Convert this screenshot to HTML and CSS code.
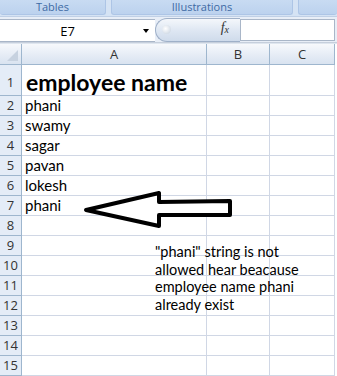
FILE: index.html
```html
<!DOCTYPE html>
<html>
<head>
  <title>employee sheet</title>
  <link rel="stylesheet" href="styles.css">
</head>
<body>
  <!-- ribbon group labels -->
  <div class="ribbon">
    <div class="group g-tables">Tables</div>
    <div class="group g-illus">Illustrations</div>
    <div class="group g-more"></div>
  </div>

  <!-- formula bar -->
  <div class="formulabar">
    <div class="namebox">
      <span class="cellref">E7</span>
      <span class="drop"></span>
    </div>
    <div class="pill">
      <span class="knob"></span>
      <span class="fx"><i>f</i><sub>x</sub></span>
    </div>
    <div class="input"></div>
  </div>

  <div class="sheet">
    <div class="grid">
      <div class="hd corner"><span class="tri"></span></div>
      <div class="hd col">A</div>
      <div class="hd col">B</div>
      <div class="hd col">C</div>

      <div class="rh big">1</div><div class="c big title">employee name</div><div class="c big"></div><div class="c big"></div>
      <div class="rh">2</div><div class="c">phani</div><div class="c"></div><div class="c"></div>
      <div class="rh">3</div><div class="c">swamy</div><div class="c"></div><div class="c"></div>
      <div class="rh">4</div><div class="c">sagar</div><div class="c"></div><div class="c"></div>
      <div class="rh">5</div><div class="c">pavan</div><div class="c"></div><div class="c"></div>
      <div class="rh">6</div><div class="c">lokesh</div><div class="c"></div><div class="c"></div>
      <div class="rh">7</div><div class="c">phani</div><div class="c"></div><div class="c"></div>
      <div class="rh">8</div><div class="c"></div><div class="c"></div><div class="c"></div>
      <div class="rh">9</div><div class="c"></div><div class="c"></div><div class="c"></div>
      <div class="rh">10</div><div class="c"></div><div class="c"></div><div class="c"></div>
      <div class="rh">11</div><div class="c"></div><div class="c"></div><div class="c"></div>
      <div class="rh">12</div><div class="c"></div><div class="c"></div><div class="c"></div>
      <div class="rh">13</div><div class="c"></div><div class="c"></div><div class="c"></div>
      <div class="rh">14</div><div class="c"></div><div class="c"></div><div class="c"></div>
      <div class="rh">15</div><div class="c"></div><div class="c"></div><div class="c"></div>
    </div>

    <!-- drawn arrow and note floating over the cells -->
    <svg class="arrow" width="160" height="44" viewBox="0 0 160 44">
      <polygon points="4,20 77,3 77,12 148,11 148,25 77,25 77,36" fill="#fff" stroke="#000" stroke-width="4" stroke-linejoin="round"/>
    </svg>
    <div class="note">"phani" string is not<br>allowed hear beacause<br>employee name phani<br>already exist</div>
  </div>
</body>
</html>
```

FILE: styles.css
```css
/* sheet screenshot */
body {
  margin: 0;
  width: 337px;
  height: 376px;
  overflow: hidden;
  background: #fff;
  font-family: Lato, "Open Sans", sans-serif;
}

.ribbon {
  display: flex;
  gap: 5px;
  height: 17px;
  background: #d5e3f4;
  box-sizing: border-box;
  border-bottom: 1px solid #c0d0e6;
}

.group {
  height: 15px;
  background: linear-gradient(#c8dbf2, #bcd2ee);
  border: 1px solid #adc5e6;
  border-top: none;
  border-radius: 0 0 3px 3px;
  color: #3e6aa4;
  font-family: "Open Sans", sans-serif;
  font-size: 11px;
  line-height: 14px;
  text-align: center;
  box-sizing: border-box;
}

.g-tables { width: 106px; border-left: none; }
.g-illus { width: 182px; }
.g-more { flex: 1; border-right: none; }

.formulabar {
  display: flex;
  height: 26px;
  padding-top: 2px;
  background: #e8eef7;
  border-bottom: 1px solid #c6cfdc;
  box-sizing: border-box;
}

.namebox {
  width: 155px;
  background: #fff;
  display: flex;
  align-items: center;
  border-top: 1px solid #a9b6c8;
  border-bottom: 1px solid #a9b6c8;
}

.cellref {
  width: 135px;
  text-align: center;
  font-family: "Open Sans", sans-serif;
  font-size: 13px;
}

.drop {
  width: 0;
  height: 0;
  border-left: 3px solid transparent;
  border-right: 3px solid transparent;
  border-top: 4px solid #000;
  margin-left: 8px;
}

.pill {
  width: 85px;
  height: 24px;
  margin-top: -1px;
  border: 1px solid #9fb0c8;
  border-right: none;
  border-radius: 12px 0 0 12px;
  background: linear-gradient(#f4f7fb, #dde6f2 55%, #cfdbeb);
  position: relative;
  box-sizing: border-box;
}

.knob {
  position: absolute;
  left: 6px;
  top: 6px;
  width: 9px;
  height: 9px;
  border-radius: 50%;
  background: radial-gradient(circle at 40% 40%, #fff, #c3cfdd);
}

.fx {
  position: absolute;
  right: 11px;
  top: 1px;
  font-family: "Liberation Serif", serif;
  font-size: 14px;
  color: #333;
}

.fx sub {
  font-size: 10px;
  font-style: italic;
  vertical-align: -1px;
}

.input {
  flex: 1;
  background: #fff;
  border: 1px solid #a9b6c8;
  margin-right: 2px;
  height: 22px;
  box-sizing: border-box;
}

.sheet {
  position: relative;
  border-top: 1px solid #dfe6ef;
}

.grid {
  display: grid;
  grid-template-columns: 22px 185px 63px 65px;
  grid-template-rows: 21px 31px repeat(14, 20px);
}

.hd {
  background: linear-gradient(#f7f9fc, #e4ebf5 60%, #d9e3f0);
  border-right: 1px solid #9eb6ce;
  border-bottom: 1px solid #9eb6ce;
  box-sizing: border-box;
}

.col {
  text-align: center;
  font-family: "Open Sans", sans-serif;
  font-size: 13px;
  line-height: 20px;
  color: #333;
}

.corner {
  position: relative;
}

.tri {
  position: absolute;
  right: 3px;
  bottom: 3px;
  width: 0;
  height: 0;
  border-left: 11px solid transparent;
  border-bottom: 11px solid #c7d2e0;
}

.rh {
  background: #e4ecf7;
  border-right: 1px solid #9eb6ce;
  border-bottom: 1px solid #9eb6ce;
  box-sizing: border-box;
  text-align: center;
  font-family: "Open Sans", sans-serif;
  font-size: 13px;
  line-height: 19px;
  color: #333;
}

.rh.big {
  line-height: 30px;
  padding-top: 2px;
}

.c {
  border-right: 1px solid #d0d7e5;
  border-bottom: 1px solid #d0d7e5;
  box-sizing: border-box;
  padding-left: 3px;
  font-size: 15px;
  line-height: 19px;
  color: #000;
}

.title {
  font-weight: bold;
  font-size: 23px;
  line-height: 34px;
  padding-left: 4px;
}

.arrow {
  position: absolute;
  left: 82px;
  top: 146px;
}

.note {
  position: absolute;
  left: 155px;
  top: 199px;
  font-size: 14.5px;
  line-height: 17.7px;
  color: #000;
}
```
